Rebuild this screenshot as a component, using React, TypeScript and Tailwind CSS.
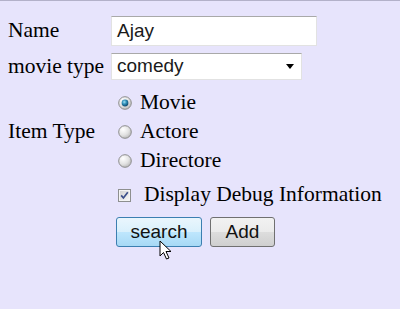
import React from "react";

const serif = { fontFamily: '"Liberation Serif", "Times New Roman", serif' };
const sans = { fontFamily: '"Liberation Sans", Arial, sans-serif' };

function Radio({ checked }: { checked?: boolean }) {
  return (
    <svg width="14" height="14" viewBox="0 0 14 14" className="shrink-0">
      <defs>
        <radialGradient id={checked ? "rgc" : "rgu"} cx="35%" cy="30%" r="75%">
          <stop offset="0%" stopColor="#ffffff" />
          <stop offset="60%" stopColor="#e2e2e2" />
          <stop offset="100%" stopColor="#b9b9b9" />
        </radialGradient>
        <radialGradient id="dot" cx="40%" cy="35%" r="70%">
          <stop offset="0%" stopColor="#9fe0f5" />
          <stop offset="45%" stopColor="#2f8fb8" />
          <stop offset="100%" stopColor="#0d3f63" />
        </radialGradient>
      </defs>
      <circle cx="7" cy="7" r="6.3" fill={`url(#${checked ? "rgc" : "rgu"})`} stroke="#8d8d8d" strokeWidth="1" />
      {checked && <circle cx="7" cy="7" r="3.4" fill="url(#dot)" />}
    </svg>
  );
}

function Checkbox() {
  return (
    <svg width="13" height="13" viewBox="0 0 13 13" className="shrink-0">
      <defs>
        <linearGradient id="cbg" x1="0" y1="0" x2="1" y2="1">
          <stop offset="0%" stopColor="#d2d2d2" />
          <stop offset="100%" stopColor="#f6f6f6" />
        </linearGradient>
      </defs>
      <rect x="0.5" y="0.5" width="12" height="12" fill="#f4f4f4" stroke="#8e8f8f" />
      <rect x="2" y="2" width="9" height="9" fill="url(#cbg)" />
      <path d="M3.2 6.4 L5.4 9 L9.8 3.2" fill="none" stroke="#3b4f8a" strokeWidth="1.7" />
    </svg>
  );
}

export default function App() {
  return (
    <div className="w-[400px] h-[309px] bg-[#e7e4fc] border-t border-[#b3b1c9] relative overflow-hidden text-black" style={serif}>
      <div className="flex flex-col pt-[15px] pl-[8px]">
        {/* Name */}
        <div className="flex items-center h-[30px]">
          <div className="w-[103px] text-[21.5px] leading-none">Name</div>
          <div
            className="w-[206px] h-[30px] bg-white border border-[#e2e2e2] border-t-[#a9a9a9] flex items-center pl-[5px] text-[19px] text-[#1a1a1a]"
            style={sans}
          >
            Ajay
          </div>
        </div>
        {/* movie type */}
        <div className="flex items-center h-[27px] mt-[7px]">
          <div className="w-[103px] text-[21.5px] leading-none whitespace-nowrap">movie type</div>
          <div
            className="w-[191px] h-[27px] bg-white border border-[#e2e2e2] border-t-[#a9a9a9] flex items-center justify-between pl-[5px] pr-[7px] text-[19px] text-[#1a1a1a]"
            style={sans}
          >
            <span>comedy</span>
            <svg width="8" height="5" viewBox="0 0 8 5">
              <path d="M0 0 L8 0 L4 5 Z" fill="#000" />
            </svg>
          </div>
        </div>
        {/* Item Type */}
        <div className="flex items-center mt-[8px]">
          <div className="w-[110px] text-[21.5px] leading-none">Item Type</div>
          <div className="flex flex-col">
            {[
              ["Movie", true],
              ["Actore", false],
              ["Directore", false],
            ].map(([label, checked]) => (
              <div key={label as string} className="flex items-center h-[29px] gap-[8px]">
                <Radio checked={checked as boolean} />
                <span className="text-[21.5px] leading-none">{label as string}</span>
              </div>
            ))}
          </div>
        </div>
        {/* Checkbox */}
        <div className="flex items-center h-[30px] mt-[5px] pl-[110px] gap-[13px]">
          <Checkbox />
          <span className="text-[21.5px] leading-none whitespace-nowrap">Display Debug Information</span>
        </div>
        {/* Buttons */}
        <div className="flex items-center mt-[7px] pl-[108px] gap-[8px]">
          <div
            className="w-[86px] h-[30px] rounded-[3px] border border-[#3c7fb1] flex items-center justify-center text-[19px] text-[#111]"
            style={{ ...sans, background: "linear-gradient(#eaf6fd 0%, #d9f0fc 50%, #bee6fd 51%, #a7d9f5 100%)" }}
          >
            search
          </div>
          <div
            className="w-[65px] h-[30px] rounded-[3px] border border-[#707070] flex items-center justify-center text-[19px] text-[#111]"
            style={{ ...sans, background: "linear-gradient(#f2f2f2 0%, #ebebeb 50%, #dddddd 51%, #cfcfcf 100%)" }}
          >
            Add
          </div>
        </div>
      </div>
      {/* mouse cursor */}
      <svg className="absolute left-[159px] top-[239px]" width="14" height="21" viewBox="0 0 14 21">
        <path d="M1 1 L1 16 L4.5 12.5 L7.5 19 L10 18 L7 11.5 L12 11.5 Z" fill="#fff" stroke="#000" strokeWidth="1" strokeLinejoin="miter" />
      </svg>
    </div>
  );
}
